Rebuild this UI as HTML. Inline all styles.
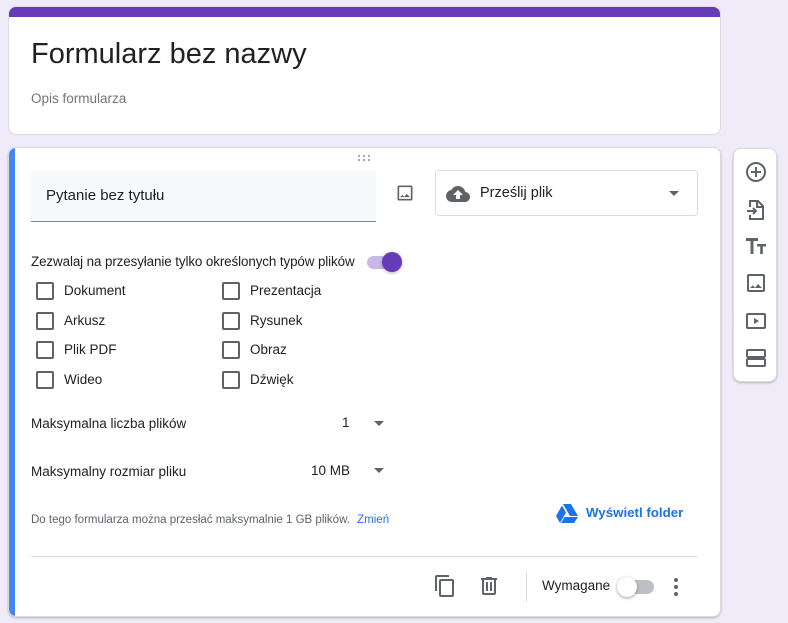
<!DOCTYPE html>
<html><head><meta charset="utf-8"><style>
*{box-sizing:border-box;margin:0;padding:0}
body{width:788px;height:623px;background:#f0ebf8;font-family:"Liberation Sans",Arial,sans-serif;color:#202124;position:relative;overflow:hidden}
.a{position:absolute}
.card{background:#fff;border-radius:8px;border:1px solid #dadce0}
.cb{position:absolute;width:18px;height:18px;border:2px solid #5f6368;border-radius:2px}
.lb{position:absolute;font-size:13.5px;color:#202124}
</style></head><body>
<div class="a card" style="left:8px;top:6px;width:713px;height:129px;overflow:hidden">
 <div class="a" style="left:0;top:0;width:100%;height:10px;background:#673ab7"></div>
</div>
<div class="a" style="left:31px;top:38px;font-size:29px;color:#202124">Formularz bez nazwy</div>
<div class="a" style="left:31px;top:91px;font-size:13.5px;color:#70757a">Opis formularza</div>

<div class="a card" style="left:8px;top:147px;width:713px;height:470px;overflow:hidden;box-shadow:0 1px 2px rgba(0,0,0,.25)">
 <div class="a" style="left:0;top:0;width:6px;height:100%;background:#4285f4"></div>
</div>
<svg class="a" style="left:357px;top:154px" width="16" height="8"><g fill="#9aa0a6"><circle cx="2" cy="2" r="1.1"/><circle cx="7" cy="2" r="1.1"/><circle cx="12" cy="2" r="1.1"/><circle cx="2" cy="6" r="1.1"/><circle cx="7" cy="6" r="1.1"/><circle cx="12" cy="6" r="1.1"/></g></svg>
<div class="a" style="left:31px;top:171px;width:345px;height:51px;background:#f8f9fa;border-bottom:1px solid #80868b"></div>
<div class="a" style="left:46px;top:187px;font-size:15px">Pytanie bez tytułu</div>
<svg class="a" style="left:395px;top:183px" width="20" height="20" viewBox="0 0 24 24"><path fill="#5f6368" d="M19 3H5a2 2 0 0 0-2 2v14a2 2 0 0 0 2 2h14a2 2 0 0 0 2-2V5a2 2 0 0 0-2-2zm0 16H5V5h14v14zm-5-6l-3 3.7-2-2.4L6 17h12z"/></svg>
<div class="a" style="left:435px;top:170px;width:263px;height:46px;border:1px solid #dadce0;border-radius:4px"></div>
<svg class="a" style="left:446px;top:182px" width="24" height="24" viewBox="0 0 24 24"><path fill="#5f6368" d="M19.35 10.04A7.49 7.49 0 0 0 12 4C9.11 4 6.6 5.64 5.35 8.04A5.994 5.994 0 0 0 0 14c0 3.31 2.69 6 6 6h13c2.76 0 5-2.24 5-5 0-2.64-2.05-4.78-4.65-4.96zM14 13v4h-4v-4H7l5-5 5 5h-3z"/></svg>
<div class="a" style="left:480px;top:185px;font-size:14.5px">Prześlij plik</div>
<div class="a" style="left:669px;top:191px;border-left:5px solid transparent;border-right:5px solid transparent;border-top:5px solid #5f6368"></div>

<div class="a" style="left:31px;top:254px;font-size:13.4px;letter-spacing:-0.1px">Zezwalaj na przesyłanie tylko określonych typów plików</div>
<div class="a" style="left:367px;top:256px;width:32px;height:13px;border-radius:7px;background:#c7b8e8"></div>
<div class="a" style="left:382px;top:252px;width:20px;height:20px;border-radius:50%;background:#673ab7;box-shadow:0 1px 3px rgba(0,0,0,.3)"></div>

<div class="cb" style="left:36px;top:282px"></div><div class="lb" style="left:64px;top:283px">Dokument</div>
<div class="cb" style="left:36px;top:312px"></div><div class="lb" style="left:64px;top:313px">Arkusz</div>
<div class="cb" style="left:36px;top:341px"></div><div class="lb" style="left:64px;top:342px">Plik PDF</div>
<div class="cb" style="left:36px;top:371px"></div><div class="lb" style="left:64px;top:372px">Wideo</div>
<div class="cb" style="left:222px;top:282px"></div><div class="lb" style="left:250px;top:283px">Prezentacja</div>
<div class="cb" style="left:222px;top:312px"></div><div class="lb" style="left:250px;top:313px">Rysunek</div>
<div class="cb" style="left:222px;top:341px"></div><div class="lb" style="left:250px;top:342px">Obraz</div>
<div class="cb" style="left:222px;top:371px"></div><div class="lb" style="left:250px;top:372px">Dźwięk</div>

<div class="lb" style="left:31px;top:416px;font-size:13.5px">Maksymalna liczba plików</div>
<div class="lb" style="left:342px;top:415px;font-size:13.5px">1</div>
<div class="a" style="left:374px;top:421px;border-left:5px solid transparent;border-right:5px solid transparent;border-top:5px solid #5f6368"></div>
<div class="lb" style="left:31px;top:464px;font-size:13.5px">Maksymalny rozmiar pliku</div>
<div class="lb" style="left:311px;top:463px;font-size:13.5px">10 MB</div>
<div class="a" style="left:374px;top:468px;border-left:5px solid transparent;border-right:5px solid transparent;border-top:5px solid #5f6368"></div>

<div class="a" style="left:31px;top:514px;font-size:11.5px;color:#5f6368">Do tego formularza można przesłać maksymalnie 1 GB plików. <span style="color:#1a73e8;margin-left:4px">Zmień</span></div>
<svg class="a" style="left:556px;top:504px" width="22" height="19" viewBox="0 0 22 19"><path fill="#1a73e8" d="M7 0h8l7 12h-8zM6 1.5l4 7-6 10.5L0 12zM8.5 13H22l-4 6H5z"/></svg>
<div class="a" style="left:586px;top:505px;font-size:13.3px;font-weight:bold;color:#1a73e8">Wyświetl folder</div>

<div class="a" style="left:31px;top:556px;width:667px;height:1px;background:#dadce0"></div>
<svg class="a" style="left:433px;top:574px" width="24" height="24" viewBox="0 0 24 24"><path fill="#5f6368" d="M16 1H4a2 2 0 0 0-2 2v14h2V3h12V1zm3 4H8a2 2 0 0 0-2 2v14a2 2 0 0 0 2 2h11a2 2 0 0 0 2-2V7a2 2 0 0 0-2-2zm0 16H8V7h11v14z"/></svg>
<svg class="a" style="left:477px;top:574px" width="24" height="24" viewBox="0 0 24 24"><path fill="#5f6368" d="M15 4V3H9v1H4v2h1v13a2 2 0 0 0 2 2h10a2 2 0 0 0 2-2V6h1V4h-5zm2 15H7V6h10v13zM9 8h2v9H9zm4 0h2v9h-2z"/></svg>
<div class="a" style="left:526px;top:572px;width:1px;height:30px;background:#dadce0"></div>
<div class="lb" style="left:542px;top:578px;font-size:13.5px">Wymagane</div>
<div class="a" style="left:620px;top:580px;width:34px;height:14px;border-radius:7px;background:#bdc1c6"></div>
<div class="a" style="left:617px;top:577px;width:20px;height:20px;border-radius:50%;background:#fff;box-shadow:0 1px 3px rgba(0,0,0,.4)"></div>
<svg class="a" style="left:664px;top:575px" width="24" height="24" viewBox="0 0 24 24"><circle cx="12" cy="5" r="2" fill="#5f6368"/><circle cx="12" cy="12" r="2" fill="#5f6368"/><circle cx="12" cy="19" r="2" fill="#5f6368"/></svg>

<div class="a card" style="left:733px;top:148px;width:44px;height:234px;box-shadow:0 1px 2px rgba(0,0,0,.25)"></div>
<svg class="a" style="left:744px;top:160px" width="24" height="24" viewBox="0 0 24 24"><circle cx="12" cy="12" r="9" fill="none" stroke="#5f6368" stroke-width="2"/><path d="M12 7v10M7 12h10" stroke="#5f6368" stroke-width="2"/></svg>
<svg class="a" style="left:744px;top:198px" width="24" height="24" viewBox="0 0 24 24"><path fill="none" stroke="#5f6368" stroke-width="2" d="M6 9V3h8l5 5v13H6v-4M13 3v6h6M3 13h9M9 10l3 3-3 3"/></svg>
<svg class="a" style="left:744px;top:234px" width="24" height="24" viewBox="0 0 24 24"><path fill="#5f6368" d="M2 4h12v3H9.5v13h-3V7H2zM13 10h9v2.5h-3.2V20h-2.6v-7.5H13z"/></svg>
<svg class="a" style="left:744px;top:271px" width="24" height="24" viewBox="0 0 24 24"><path fill="#5f6368" d="M19 3H5a2 2 0 0 0-2 2v14a2 2 0 0 0 2 2h14a2 2 0 0 0 2-2V5a2 2 0 0 0-2-2zm0 16H5V5h14v14zm-5-6l-3 3.7-2-2.4L6 17h12z"/></svg>
<svg class="a" style="left:744px;top:309px" width="24" height="24" viewBox="0 0 24 24"><rect x="3" y="5" width="18" height="14" rx="1" fill="none" stroke="#5f6368" stroke-width="2"/><path fill="#5f6368" d="M10 9l5 3-5 3z"/></svg>
<svg class="a" style="left:744px;top:346px" width="24" height="24" viewBox="0 0 24 24"><rect x="3" y="4" width="18" height="7" rx="1" fill="none" stroke="#5f6368" stroke-width="2"/><rect x="3" y="13" width="18" height="7" rx="1" fill="none" stroke="#5f6368" stroke-width="2"/></svg>
</body></html>
